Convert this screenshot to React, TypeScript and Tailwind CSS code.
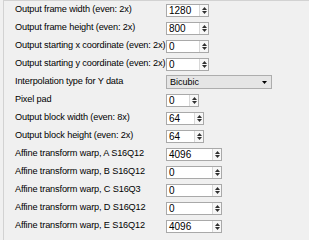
import React from "react";

type Row = { label: string; value?: string; w?: number; select?: boolean };

const rows: Row[] = [
  { label: "Output frame width (even: 2x)", value: "1280", w: 43 },
  { label: "Output frame height (even: 2x)", value: "800", w: 43 },
  { label: "Output starting x coordinate (even: 2x)", value: "0", w: 43 },
  { label: "Output starting y coordinate (even: 2x)", value: "0", w: 43 },
  { label: "Interpolation type for Y data", select: true },
  { label: "Pixel pad", value: "0", w: 33 },
  { label: "Output block width (even: 8x)", value: "64", w: 38 },
  { label: "Output block height (even: 2x)", value: "64", w: 38 },
  { label: "Affine transform warp, A S16Q12", value: "4096", w: 56 },
  { label: "Affine transform warp, B S16Q12", value: "0", w: 56 },
  { label: "Affine transform warp, C S16Q3", value: "0", w: 56 },
  { label: "Affine transform warp, D S16Q12", value: "0", w: 56 },
  { label: "Affine transform warp, E S16Q12", value: "4096", w: 56 },
];

function Spin({ value, w }: { value: string; w: number }) {
  return (
    <div
      className="flex h-[13px] border border-[#a9a9a9] bg-white"
      style={{ width: w }}
    >
      <div className="flex-1 pl-[2px] leading-[11px] text-[10px] text-black">{value}</div>
      <div className="w-[9px] border-l border-[#d8d8d8] bg-[#f7f7f7] flex flex-col items-center justify-center gap-[1px]">
        <svg width="5" height="3" viewBox="0 0 5 3">
          <path d="M0 3 L2.5 0 L5 3 Z" fill="#303030" />
        </svg>
        <svg width="5" height="3" viewBox="0 0 5 3">
          <path d="M0 0 L2.5 3 L5 0 Z" fill="#303030" />
        </svg>
      </div>
    </div>
  );
}

function Select() {
  return (
    <div className="flex h-[14px] w-[106px] items-center justify-between border border-[#adadad] bg-[#e5e5e5] pl-[3px] pr-[4px]">
      <span className="text-[9px] leading-[12px] text-black">Bicubic</span>
      <svg width="5" height="3" viewBox="0 0 5 3">
        <path d="M0 0 L2.5 3 L5 0 Z" fill="#000" />
      </svg>
    </div>
  );
}

export default function App() {
  return (
    <div
      className="relative h-[240px] w-[309px] overflow-hidden bg-[#f0f0f0]"
      style={{ fontFamily: "'Liberation Sans', Arial, sans-serif" }}
    >
      <div className="ml-[3px] h-full border-l border-t border-[#d2d2d2]">
        {rows.map((r, i) => (
          <div key={i} className="flex h-[18px] items-center">
            <div className="w-[162px] shrink-0 pl-[11px] text-[9.2px] tracking-[-0.15px] whitespace-nowrap text-black">
              {r.label}
            </div>
            {r.select ? <Select /> : <Spin value={r.value!} w={r.w!} />}
          </div>
        ))}
      </div>
    </div>
  );
}
